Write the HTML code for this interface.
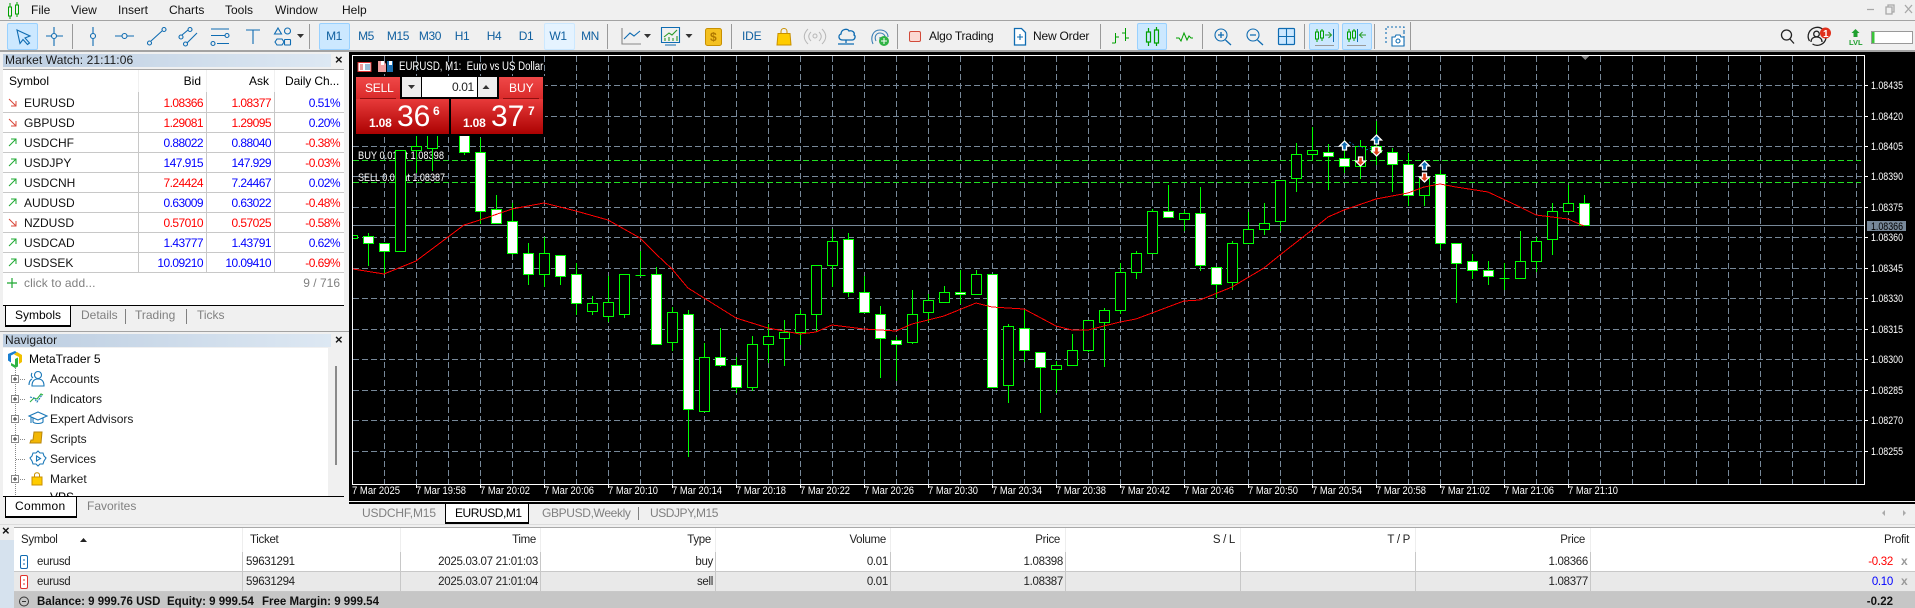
<!DOCTYPE html>
<html><head><meta charset="utf-8"><title>MetaTrader 5</title>
<style>
html,body{margin:0;padding:0;background:#f0f0f0;width:1915px;height:608px;overflow:hidden}
body{position:relative;font-family:"Liberation Sans",sans-serif;font-size:12px;color:#000}
.a{position:absolute}
.t{position:absolute;white-space:nowrap;line-height:14px}
.m{top:3px;font-size:12px;color:#111}
.tf{top:29px;font-size:12px;color:#0f5f9f;width:30px;text-align:center;letter-spacing:-.4px}
.title{position:absolute;left:3px;width:328px;height:13px;background:linear-gradient(90deg,#bccde0,#dde8f3);font-size:12px;line-height:13px;color:#1a1a1a;padding-left:2px;box-sizing:border-box;letter-spacing:.1px}
.row{position:absolute;left:3px;width:341px;height:20px;border-bottom:1px solid #c8c8c8;box-sizing:border-box;background:#fff}
.row span{position:absolute;top:3px;line-height:14px;white-space:nowrap;letter-spacing:-.55px}
.s{left:21px;color:#111;letter-spacing:0!important}
.b{right:141px}.k{right:73px}.d{right:4px}
.r{color:#f00}.u{color:#00f}
.v{position:absolute;width:1px;background:#c8c8c8}
.g{color:#808080}
.n{left:50px;font-size:12px;color:#1a1a1a}
.h,.c{font-size:11.5px;letter-spacing:-.3px;color:#222}
.bal{font-weight:bold;font-size:11.5px;letter-spacing:0;color:#111;top:595px}
svg{position:absolute;left:0;top:0}
svg text{font-family:"Liberation Sans",sans-serif}
</style></head><body>

<!-- chart -->
<div class="a" style="left:349px;top:52px;width:1566px;height:449px;background:#000"></div>
<svg width="1915" height="608" shape-rendering="crispEdges">
<g stroke="#778899" fill="none" stroke-dasharray="6 3">
<path d="M353 85.5H1864M353 116.5H1864M353 146.5H1864M353 176.5H1864M353 207.5H1864M353 237.5H1864M353 268.5H1864M353 298.5H1864M353 329.5H1864M353 359.5H1864M353 390.5H1864M353 420.5H1864M353 451.5H1864"/>
<path d="M384.5 56V484M416.5 56V484M448.5 56V484M480.5 56V484M512.5 56V484M544.5 56V484M576.5 56V484M608.5 56V484M640.5 56V484M672.5 56V484M704.5 56V484M736.5 56V484M768.5 56V484M800.5 56V484M832.5 56V484M864.5 56V484M896.5 56V484M928.5 56V484M960.5 56V484M992.5 56V484M1024.5 56V484M1056.5 56V484M1088.5 56V484M1120.5 56V484M1152.5 56V484M1184.5 56V484M1216.5 56V484M1248.5 56V484M1280.5 56V484M1312.5 56V484M1344.5 56V484M1376.5 56V484M1408.5 56V484M1440.5 56V484M1472.5 56V484M1504.5 56V484M1536.5 56V484M1568.5 56V484M1600.5 56V484M1632.5 56V484M1664.5 56V484M1696.5 56V484M1728.5 56V484M1760.5 56V484M1792.5 56V484M1824.5 56V484M1856.5 56V484"/>
</g>
<path d="M353 225.5H1864" stroke="#778899"/>
<path d="M353 160.5H1861M353 182.5H1861" stroke="#22e022" stroke-dasharray="6 3"/>
<text x="358" y="159" font-size="11" fill="#fff" textLength="86" lengthAdjust="spacingAndGlyphs">BUY 0.01 at 1.08398</text>
<text x="358" y="181" font-size="11" fill="#fff" textLength="87" lengthAdjust="spacingAndGlyphs">SELL 0.01 at 1.08387</text>
<!-- wicks -->
<path stroke="#0f0" fill="none" d="M368.5 233V266M384.5 243V274M416.5 134V173M432.5 134V171M464.5 136V155M480.5 138V224M496.5 195V223M512.5 203V255M528.5 243V285M544.5 237V287M560.5 255V285M576.5 263V315M592.5 296V315M608.5 276V322M624.5 314V318M640.5 251V275M656.5 267V274M672.5 307V351M688.5 310V457M704.5 343V357M720.5 328V367M736.5 357V393M752.5 336V391M768.5 324V363M784.5 320V366M800.5 310V345M816.5 314V332M832.5 229V287M848.5 233V297M864.5 276V292M880.5 306V378M896.5 337V381M912.5 290V344M928.5 294V322M944.5 286V292M960.5 270V304M976.5 270V274M1008.5 324V403M1024.5 310V362M1040.5 367V413M1056.5 361V393M1072.5 334V350M1088.5 350V352M1104.5 308V367M1120.5 263V314M1136.5 251V279M1152.5 209V211M1168.5 185V211M1184.5 211V231M1200.5 187V271M1216.5 284V298M1232.5 241V290M1248.5 212V229M1264.5 203V235M1280.5 221V231M1296.5 143V192M1312.5 127V160M1328.5 144V190M1344.5 140V173M1360.5 140V179M1376.5 121V165M1392.5 148V192M1408.5 153V206M1424.5 173V206M1440.5 170V249M1456.5 263V303M1472.5 254V279M1488.5 261V285M1504.5 263V290M1520.5 231V261M1536.5 237V272M1552.5 203V255M1568.5 185V213M1584.5 195V203"/>
<!-- hollow -->
<path stroke="#0f0" fill="#000" d="M347.5 235.5h10v3h-10zM395.5 150.5h10v101h-10zM411.5 146.5h10v4h-10zM427.5 120.5h10v28h-10zM539.5 253.5h10v21h-10zM587.5 303.5h10v8h-10zM603.5 302.5h10v14h-10zM619.5 274.5h10v40h-10zM635.5 275.5h10zM667.5 312.5h10v30h-10zM699.5 357.5h10v54h-10zM747.5 344.5h10v43h-10zM763.5 336.5h10v8h-10zM779.5 332.5h10v6h-10zM795.5 314.5h10v18h-10zM811.5 265.5h10v49h-10zM827.5 241.5h10v24h-10zM907.5 314.5h10v28h-10zM923.5 300.5h10v12h-10zM939.5 292.5h10v10h-10zM971.5 274.5h10v20h-10zM1003.5 326.5h10v59h-10zM1051.5 365.5h10v4h-10zM1067.5 350.5h10v15h-10zM1083.5 320.5h10v30h-10zM1099.5 310.5h10v12h-10zM1115.5 272.5h10v38h-10zM1131.5 253.5h10v19h-10zM1147.5 211.5h10v42h-10zM1179.5 213.5h10v6h-10zM1227.5 243.5h10v39h-10zM1243.5 229.5h10v14h-10zM1259.5 223.5h10v6h-10zM1275.5 180.5h10v41h-10zM1291.5 154.5h10v24h-10zM1307.5 150.5h10v4h-10zM1355.5 146.5h10v20h-10zM1419.5 178.5h10v17h-10zM1499.5 278.5h10zM1515.5 261.5h10v17h-10zM1531.5 241.5h10v20h-10zM1547.5 211.5h10v28h-10zM1563.5 203.5h10v8h-10z"/>
<!-- white -->
<path stroke="#0f0" fill="#fff" d="M363.5 236.5h10v7h-10zM379.5 243.5h10v8h-10zM459.5 120.5h10v32h-10zM475.5 152.5h10v59h-10zM491.5 209.5h10v14h-10zM507.5 221.5h10v32h-10zM523.5 253.5h10v21h-10zM555.5 255.5h10v21h-10zM571.5 274.5h10v29h-10zM651.5 274.5h10v70h-10zM683.5 314.5h10v95h-10zM715.5 357.5h10v8h-10zM731.5 365.5h10v22h-10zM843.5 239.5h10v53h-10zM859.5 292.5h10v20h-10zM875.5 314.5h10v24h-10zM891.5 340.5h10v4h-10zM955.5 292.5h10v2h-10zM987.5 274.5h10v113h-10zM1019.5 328.5h10v22h-10zM1035.5 352.5h10v15h-10zM1163.5 211.5h10v6h-10zM1195.5 213.5h10v52h-10zM1211.5 267.5h10v17h-10zM1323.5 152.5h10v4h-10zM1339.5 158.5h10v8h-10zM1371.5 146.5h10v6h-10zM1387.5 152.5h10v12h-10zM1403.5 164.5h10v31h-10zM1435.5 174.5h10v69h-10zM1451.5 243.5h10v20h-10zM1467.5 261.5h10v9h-10zM1483.5 270.5h10v6h-10zM1579.5 203.5h10v22h-10z"/>
<!-- MA -->
<polyline fill="none" stroke="#f00" stroke-width="1" points="353,269 384,274 416,261 432,249 448,237 464,225 480,220 512,209 544,203 576,211 608,220 640,238 656,254 672,269 688,288 704,298 736,318 768,328 800,334 816,332 832,325 864,329 896,331 912,324 944,316 976,303 992,307 1024,309 1056,326 1072,330 1088,330 1120,322 1136,319 1168,307 1184,301 1200,300 1232,287 1264,268 1280,255 1312,230 1328,217 1344,210 1376,199 1408,193 1424,187 1440,184 1456,187 1488,192 1520,207 1536,215 1568,219 1584,226"/>
<!-- trade arrows -->
<g shape-rendering="auto" stroke="#fff" stroke-width="1.300">
<path fill="#0f6cb2" d="M1344.500 141l5 5h-3v4h-4v-4h-3zM1376.500 135l5 5h-3v4h-4v-4h-3zM1424.500 161l5 5h-3v4h-4v-4h-3z"/>
<path fill="#e2401c" d="M1360.500 166l5-5h-3v-4h-4v4h-3zM1376.500 156l5-5h-3v-4h-4v4h-3zM1424.500 182l5-5h-3v-4h-4v4h-3z"/>
</g>
<path d="M1349 142l5 3M1358 146l5 2M1366 150l5-2" stroke="#0f6cb2" stroke-dasharray="2 2" fill="none"/>
<!-- frame -->
<rect x="349" y="53" width="3" height="447" fill="#000"/>
<path d="M352.500 55.500H1864.500V484.500H352.500Z" fill="none" stroke="#fff"/>
<polygon points="1581,56 1589,56 1585,60" fill="#888"/>
<path stroke="#fff" d="M1865 85.500h3M1865 116.500h3M1865 146.500h3M1865 176.500h3M1865 207.500h3M1865 237.500h3M1865 268.500h3M1865 298.500h3M1865 329.500h3M1865 359.500h3M1865 390.500h3M1865 420.500h3M1865 451.500h3M416.500 485v3M480.500 485v3M544.500 485v3M608.500 485v3M672.500 485v3M736.500 485v3M800.500 485v3M864.500 485v3M928.500 485v3M992.500 485v3M1056.500 485v3M1120.500 485v3M1184.500 485v3M1248.500 485v3M1312.500 485v3M1376.500 485v3M1440.500 485v3M1504.500 485v3M1568.500 485v3"/>
<g fill="#fff" font-size="11" shape-rendering="auto">
<text x="1871" y="89" textLength="32" lengthAdjust="spacingAndGlyphs">1.08435</text>
<text x="1871" y="120" textLength="32" lengthAdjust="spacingAndGlyphs">1.08420</text>
<text x="1871" y="150" textLength="32" lengthAdjust="spacingAndGlyphs">1.08405</text>
<text x="1871" y="180" textLength="32" lengthAdjust="spacingAndGlyphs">1.08390</text>
<text x="1871" y="211" textLength="32" lengthAdjust="spacingAndGlyphs">1.08375</text>
<text x="1871" y="241" textLength="32" lengthAdjust="spacingAndGlyphs">1.08360</text>
<text x="1871" y="272" textLength="32" lengthAdjust="spacingAndGlyphs">1.08345</text>
<text x="1871" y="302" textLength="32" lengthAdjust="spacingAndGlyphs">1.08330</text>
<text x="1871" y="333" textLength="32" lengthAdjust="spacingAndGlyphs">1.08315</text>
<text x="1871" y="363" textLength="32" lengthAdjust="spacingAndGlyphs">1.08300</text>
<text x="1871" y="394" textLength="32" lengthAdjust="spacingAndGlyphs">1.08285</text>
<text x="1871" y="424" textLength="32" lengthAdjust="spacingAndGlyphs">1.08270</text>
<text x="1871" y="455" textLength="32" lengthAdjust="spacingAndGlyphs">1.08255</text>
<text x="352" y="494" textLength="48" lengthAdjust="spacingAndGlyphs">7 Mar 2025</text>
<text x="416" y="494" textLength="50" lengthAdjust="spacingAndGlyphs">7 Mar 19:58</text>
<text x="480" y="494" textLength="50" lengthAdjust="spacingAndGlyphs">7 Mar 20:02</text>
<text x="544" y="494" textLength="50" lengthAdjust="spacingAndGlyphs">7 Mar 20:06</text>
<text x="608" y="494" textLength="50" lengthAdjust="spacingAndGlyphs">7 Mar 20:10</text>
<text x="672" y="494" textLength="50" lengthAdjust="spacingAndGlyphs">7 Mar 20:14</text>
<text x="736" y="494" textLength="50" lengthAdjust="spacingAndGlyphs">7 Mar 20:18</text>
<text x="800" y="494" textLength="50" lengthAdjust="spacingAndGlyphs">7 Mar 20:22</text>
<text x="864" y="494" textLength="50" lengthAdjust="spacingAndGlyphs">7 Mar 20:26</text>
<text x="928" y="494" textLength="50" lengthAdjust="spacingAndGlyphs">7 Mar 20:30</text>
<text x="992" y="494" textLength="50" lengthAdjust="spacingAndGlyphs">7 Mar 20:34</text>
<text x="1056" y="494" textLength="50" lengthAdjust="spacingAndGlyphs">7 Mar 20:38</text>
<text x="1120" y="494" textLength="50" lengthAdjust="spacingAndGlyphs">7 Mar 20:42</text>
<text x="1184" y="494" textLength="50" lengthAdjust="spacingAndGlyphs">7 Mar 20:46</text>
<text x="1248" y="494" textLength="50" lengthAdjust="spacingAndGlyphs">7 Mar 20:50</text>
<text x="1312" y="494" textLength="50" lengthAdjust="spacingAndGlyphs">7 Mar 20:54</text>
<text x="1376" y="494" textLength="50" lengthAdjust="spacingAndGlyphs">7 Mar 20:58</text>
<text x="1440" y="494" textLength="50" lengthAdjust="spacingAndGlyphs">7 Mar 21:02</text>
<text x="1504" y="494" textLength="50" lengthAdjust="spacingAndGlyphs">7 Mar 21:06</text>
<text x="1568" y="494" textLength="50" lengthAdjust="spacingAndGlyphs">7 Mar 21:10</text>
</g>
<rect x="1867" y="221" width="39" height="10" fill="#778899"/>
<text x="1871" y="230" font-size="11" fill="#000" textLength="32" lengthAdjust="spacingAndGlyphs" shape-rendering="auto">1.08366</text>
</svg>

<!-- one-click panel -->
<div class="a" style="left:353px;top:76px;width:192px;height:60px;background:#000"></div>
<div class="a" style="left:356px;top:77px;width:44px;height:22px;background:linear-gradient(#f04848,#d92a2a)"></div>
<div class="a" style="left:360px;top:98px;width:36px;height:1px;background:#8c1010"></div>
<div class="a" style="left:499px;top:77px;width:44px;height:22px;background:linear-gradient(#f04848,#d92a2a)"></div>
<div class="a" style="left:503px;top:98px;width:36px;height:1px;background:#8c1010"></div>
<div class="a" style="left:356px;top:99px;width:93px;height:35px;background:linear-gradient(#e83a3a,#ac0202)"></div>
<div class="a" style="left:451px;top:99px;width:92px;height:35px;background:linear-gradient(#e83a3a,#ac0202)"></div>
<div class="a" style="left:402px;top:77px;width:19px;height:20px;background:#eee"></div>
<div class="a" style="left:422px;top:77px;width:55px;height:20px;background:#fff"></div>
<div class="a" style="left:478px;top:77px;width:19px;height:20px;background:#eee"></div>
<span class="t" style="left:365px;top:81px;color:#fff;font-size:12px;letter-spacing:-.2px">SELL</span>
<span class="t" style="left:509px;top:81px;color:#fff;font-size:12px">BUY</span>
<span class="t" style="left:452px;top:80px;color:#222;font-size:12px;letter-spacing:-.4px">0.01</span>
<span class="t" style="left:369px;top:116px;color:#fff;font-size:12px;font-weight:bold;letter-spacing:-.2px">1.08</span>
<span class="t" style="left:397px;top:100px;color:#fff;font-size:30px;line-height:34px">36</span>
<span class="t" style="left:433px;top:104px;color:#fff;font-size:12px;font-weight:bold">6</span>
<span class="t" style="left:463px;top:116px;color:#fff;font-size:12px;font-weight:bold;letter-spacing:-.2px">1.08</span>
<span class="t" style="left:491px;top:100px;color:#fff;font-size:30px;line-height:34px">37</span>
<span class="t" style="left:528px;top:104px;color:#fff;font-size:12px;font-weight:bold">7</span>
<span class="t" style="left:399px;top:60px;color:#fff;font-size:11.500px;transform:scaleX(.84);transform-origin:left center">EURUSD, M1:&nbsp; Euro vs US Dollar</span>
<svg width="1915" height="608" style="pointer-events:none">
<rect x="358" y="62.500" width="13" height="9" fill="#fff" stroke="#d33"/><path d="M360 65h3M360 67h3M360 69h3" stroke="#d33"/><path d="M365 65h5M365 67h5M365 69h5" stroke="#37a"/>
<path d="M378 61h6l2 3v8h-8z" fill="#f2a0a0"/><path d="M381 61v4h3v-4z" fill="#fff"/><path d="M387 61h6v11h-6z" fill="#1a6fb0"/><path d="M389 61v4h3v-4z" fill="#fff"/>
<path d="M408 85h7l-3.500 4z" fill="#333"/>
<path d="M482.500 89h7l-3.500-4z" fill="#333"/>
</svg>

<!-- top bars -->
<div class="a" style="left:0;top:0;width:1915px;height:21px;background:#f0f0f0"></div>
<div class="a" style="left:0;top:20px;width:1915px;height:1px;background:#a3a3a3"></div>
<div class="a" style="left:0;top:21px;width:1915px;height:29px;background:#f0f0f0"></div>
<div class="a" style="left:0;top:50px;width:1915px;height:2px;background:#a3a3a3"></div>
<div class="a" style="left:7px;top:23px;width:29px;height:25px;background:#cce8ff;border:1px solid #99d1ff;border-radius:2px"></div>
<div class="a" style="left:319px;top:23px;width:29px;height:25px;background:#cce8ff;border:1px solid #99d1ff;border-radius:2px"></div>
<div class="a" style="left:544px;top:23px;width:29px;height:25px;background:#e5f3ff;border:1px solid #cce8ff;border-radius:2px"></div>
<div class="a" style="left:1137px;top:23px;width:28px;height:25px;background:#cce8ff;border:1px solid #99d1ff;border-radius:2px"></div>
<div class="a" style="left:1309px;top:23px;width:28px;height:25px;background:#cce8ff;border:1px solid #99d1ff;border-radius:2px"></div>
<div class="a" style="left:1342px;top:23px;width:28px;height:25px;background:#cce8ff;border:1px solid #99d1ff;border-radius:2px"></div>

<span class="t m" style="left:31px">File</span><span class="t m" style="left:71px">View</span><span class="t m" style="left:118px">Insert</span><span class="t m" style="left:169px">Charts</span><span class="t m" style="left:225px">Tools</span><span class="t m" style="left:275px">Window</span><span class="t m" style="left:342px">Help</span>

<span class="t tf" style="left:319px">M1</span><span class="t tf" style="left:351px">M5</span><span class="t tf" style="left:383px">M15</span><span class="t tf" style="left:415px">M30</span><span class="t tf" style="left:447px">H1</span><span class="t tf" style="left:479px">H4</span><span class="t tf" style="left:511px">D1</span><span class="t tf" style="left:543px">W1</span><span class="t tf" style="left:575px">MN</span>
<span class="t" style="left:742px;top:29px;color:#0f5f9f;font-size:12px;letter-spacing:-.2px">IDE</span>
<span class="t" style="left:929px;top:29px;font-size:12px;color:#111;letter-spacing:-.25px">Algo Trading</span>
<span class="t" style="left:1033px;top:29px;font-size:12px;color:#111;letter-spacing:-.2px">New Order</span>

<svg width="1915" height="60" style="height:60px">
<g fill="none" stroke="#00a000"><path d="M8.500 7h3v9h-3zM15.500 5h3v9h-3zM10 3v4M10 16v3M17 2v3M17 14v3"/></g>
<g fill="none" stroke="#0f6cb2" stroke-width="1.100">
<path d="M17 30l13 6-5 2 4.500 5-2 1.500-4.500-5-3 4z" />
<path d="M46 36h5M57 36h6M54 27v6M54 39v7"/><circle cx="54" cy="36" r="2.500"/>
<path d="M93 27v6.500M93 39v7"/><circle cx="93" cy="36" r="2.500"/>
<path d="M115 36h7M127 36h7"/><circle cx="124.500" cy="36" r="2.500"/>
<path d="M151 41l11-10"/><circle cx="149.500" cy="43" r="2"/><circle cx="164" cy="29.500" r="2"/>
<path d="M182 35l6-5M187 43l10-10"/><circle cx="181" cy="37" r="2"/><circle cx="190" cy="29.500" r="2"/><circle cx="185.500" cy="44" r="2"/>
<path d="M211 29h18M211 35.500h14M217 43.500h12"/><circle cx="227" cy="35.500" r="2"/><circle cx="213" cy="43.500" r="2"/>
<path d="M246 30h14M253 30v14"/>
<path d="M278 28l3.500 6h-7zM277 39h5l2 3-2 3h-5l-2-3z"/><circle cx="287.500" cy="31" r="3"/><rect x="284.500" y="39.500" width="6" height="5.500" rx=".5"/>
<path d="M622 28v16h19" stroke="#888"/><path d="M624 39l6-6 4 3 6-5"/>
<path d="M661.500 27.500h18v15h-18zM665 45h11"/><path d="M664 37l5-4 3 2 5-5" stroke="#2a9a2a"/><path d="M665 41v-3M669 41v-4M673 41v-3M677 41v-5" stroke="#2a9a2a"/>
<path d="M844 40c-5 0-5-5-2-6 0-5 7-6 8-3 4-1 6 2 5 4 2 1 1 5-2 5zM847 40v3M839 44h16" stroke-width="1.300" transform="translate(-1,0)"/>
<path d="M873 44c-3-7 0-14 7-14 5 0 8 3 8 7M876 41c-2-4 0-8 4-8 3 0 5 2 5 4M880 37v4" stroke="#3a7fb5"/>
<path d="M1014.500 28.500h7l4 4v12.500h-11z" stroke-width="1.300" fill="#fff"/><path d="M1017 37h6M1020 34v6"/>
<circle cx="1221" cy="35" r="6"/><path d="M1218 35h6M1221 32v6M1225.500 40l5.500 5" stroke-width="1.300"/>
<circle cx="1253" cy="35" r="6"/><path d="M1250 35h6M1257.500 40l5.500 5" stroke-width="1.300"/>
<rect x="1278.500" y="28.500" width="16" height="16" rx="1" fill="#cce8ff" stroke-width="1.200"/><path d="M1286.500 28.500v16M1278.500 36.500h16"/>
<path d="M1386 34v-7h18v5M1386 37v7M1404 32v14h-13" stroke-dasharray="2 2"/><path d="M1392 46v-9h3l1-2h4l1 2h3v9z" fill="#fff"/><circle cx="1398" cy="41" r="2"/>
</g>
<g stroke="#9a9a9a"><path d="M72.500 24v25M309.500 24v25M607.500 24v25M731.500 24v25M897.500 24v25M1100.500 24v25M1202.500 24v25M1304.500 24v25M1374.500 24v25M1410.500 22v28"/></g>
<path d="M297 34h7l-3.500 4zM644 34h7l-3.500 4zM685.500 34h7l-3.500 4z" fill="#333"/>
<rect x="705.500" y="28.500" width="16" height="17" rx="2" fill="#f4c020" stroke="#c89000"/>
<text x="710" y="41" font-size="12" font-weight="bold" fill="#b07800">$</text>
<path d="M778 33.500h12l1 11.500h-14z" fill="#ffcc00" stroke="#c89000"/><path d="M781 33.500v-2c0-4 6-4 6 0v2" fill="none" stroke="#c89000"/>
<g fill="none" stroke="#b8b8b8"><circle cx="815" cy="36" r="2"/><path d="M811 32c-3 3-3 6 0 9M819 32c3 3 3 6 0 9M808 29c-5 5-5 10 0 15M822 29c5 5 5 10 0 15"/></g>
<circle cx="884" cy="41" r="5" fill="#2fb344"/><path d="M881 41h6M884 38v6" stroke="#fff"/>
<rect x="909.500" y="31.500" width="11" height="10" rx="1.500" fill="#fbd9d3" stroke="#d24a3a"/>
<g fill="none" stroke="#00a000">
<path d="M1115.500 33v10M1112 43h3.500M1115.500 37h3.500M1125.500 28v13M1122 33h3.500M1125.500 38h3.500"/>
<path d="M1146.500 32h4v10h-4zM1154.500 30h4v13h-4zM1148.500 28v4M1148.500 42v4M1156.500 27v3M1156.500 43v3" stroke-width="1.200"/>
<path d="M1176 38h3l2 3 3-8 3 7 2-4 2 2h2"/>
<path d="M1315.500 32h3v7h-3zM1320.500 31h3v7h-3zM1317 29v3M1317 39v3M1322 29v2M1322 38v3"/>
<path d="M1347.500 32h3v7h-3zM1352.500 31h3v7h-3zM1349 29v3M1349 39v3M1354 29v2M1354 38v3"/>
</g>
<path d="M1325 35h6M1328.500 32l3 3-3 3M1366 35h-6M1362.500 32l-3 3 3 3" fill="none" stroke="#2aa02a"/>
<path d="M1333.500 29v13M1357.500 29v13" fill="none" stroke="#0f6cb2"/>
<path d="M1315 45.500h19M1347 45.500h19" stroke="#999"/>
<g fill="none" stroke="#222" stroke-width="1.300"><circle cx="1786.500" cy="35" r="5"/><path d="M1790 39l4 4.500"/><circle cx="1816.500" cy="34" r="2.800"/><path d="M1811 42c0-3 2-5 5.500-5s5.500 2 5.500 5M1809.500 41a9 9 0 1 1 3 3"/></g>
<circle cx="1825.500" cy="33" r="5.500" fill="#e0311d"/>
<text x="1823" y="37" font-size="10" font-weight="bold" fill="#fff">1</text>
<path d="M1855.500 29l4 4h-2v4h-4v-4h-2z" fill="#1fa02f"/>
<text x="1849" y="45" font-size="7.500" fill="#1fa02f" font-weight="bold">LVL</text>
<rect x="1871.500" y="31.500" width="41" height="12" fill="#fff" stroke="#999"/><rect x="1872" y="32" width="2.500" height="11" fill="#3ac43a"/>
<g fill="none" stroke="#a8a8a8" stroke-width="1.300"><path d="M1867 9.500h7M1886 7h6v7h-6zM1888 7v-2h6v7h-2M1905 5l7 8M1912 5l-7 8"/></g>
</svg>

<!-- Market Watch -->
<div class="a" style="left:0;top:52px;width:349px;height:449px;background:#f0f0f0"></div>
<div class="a" style="left:0;top:50px;width:349px;height:2px;background:#a3a3a3"></div>
<div class="title" style="top:54px">Market Watch: 21:11:06</div>
<span class="t" style="left:335px;top:53px;font-size:13px;font-weight:bold;color:#111">×</span>
<div class="a" style="left:3px;top:69px;width:341px;height:236px;background:#fff;border-top:1px solid #a8a8a8;box-sizing:border-box"></div>
<span class="t" style="left:9px;top:74px">Symbol</span>
<span class="t" style="right:1714px;top:74px">Bid</span>
<span class="t" style="right:1646px;top:74px">Ask</span>
<span class="t" style="left:285px;top:74px;letter-spacing:-.1px">Daily Ch...</span>
<div class="row" style="top:93px"><span class="s">EURUSD</span><span class="b r">1.08366</span><span class="k r">1.08377</span><span class="d u">0.51%</span></div>
<div class="row" style="top:113px"><span class="s">GBPUSD</span><span class="b r">1.29081</span><span class="k r">1.29095</span><span class="d u">0.20%</span></div>
<div class="row" style="top:133px"><span class="s">USDCHF</span><span class="b u">0.88022</span><span class="k u">0.88040</span><span class="d r">-0.38%</span></div>
<div class="row" style="top:153px"><span class="s">USDJPY</span><span class="b u">147.915</span><span class="k u">147.929</span><span class="d r">-0.03%</span></div>
<div class="row" style="top:173px"><span class="s">USDCNH</span><span class="b r">7.24424</span><span class="k u">7.24467</span><span class="d u">0.02%</span></div>
<div class="row" style="top:193px"><span class="s">AUDUSD</span><span class="b u">0.63009</span><span class="k u">0.63022</span><span class="d r">-0.48%</span></div>
<div class="row" style="top:213px"><span class="s">NZDUSD</span><span class="b r">0.57010</span><span class="k r">0.57025</span><span class="d r">-0.58%</span></div>
<div class="row" style="top:233px"><span class="s">USDCAD</span><span class="b u">1.43777</span><span class="k u">1.43791</span><span class="d u">0.62%</span></div>
<div class="row" style="top:253px"><span class="s">USDSEK</span><span class="b u">10.09210</span><span class="k u">10.09410</span><span class="d r">-0.69%</span></div>
<div class="v" style="left:138px;top:92px;height:181px"></div><div class="v" style="left:206px;top:92px;height:181px"></div><div class="v" style="left:274px;top:92px;height:181px"></div>
<div class="v" style="left:138px;top:70px;height:22px;background:#f0f0f0"></div><div class="v" style="left:206px;top:70px;height:22px;background:#f0f0f0"></div><div class="v" style="left:274px;top:70px;height:22px;background:#f0f0f0"></div>
<span class="t g" style="left:24px;top:276px;letter-spacing:.1px">click to add...</span>
<span class="t g" style="right:1575px;top:276px">9 / 716</span>
<svg width="349" height="520" style="width:349px;height:520px">
<g fill="none" stroke-width="1"><path d="M9 99l7 7M16 101v5h-5M9 119l7 7M16 121v5h-5M9 219l7 7M16 221v5h-5" stroke="#d9483a"/><path d="M9 146l7-7M11 139h5v5M9 166l7-7M11 159h5v5M9 186l7-7M11 179h5v5M9 206l7-7M11 199h5v5M9 246l7-7M11 239h5v5M9 266l7-7M11 259h5v5" stroke="#1ea832"/><path d="M7 283h10M12 278v10" stroke="#1ea832" stroke-width="1.200"/></g>
</svg>
<div class="a" style="left:3px;top:305px;width:341px;height:1px;background:#000"></div>
<div class="a" style="left:5px;top:305px;width:64px;height:19px;background:#fff;border:1px solid #000;border-top:1px solid #000;border-bottom-width:2px;box-sizing:content-box"></div>
<span class="t" style="left:15px;top:308px">Symbols</span>
<span class="t g" style="left:81px;top:308px">Details</span><span class="t g" style="left:135px;top:308px">Trading</span><span class="t g" style="left:197px;top:308px">Ticks</span>
<div class="v" style="left:125px;top:309px;height:15px;background:#808080"></div><div class="v" style="left:186px;top:309px;height:15px;background:#808080"></div>

<!-- Navigator -->
<div class="a" style="left:0;top:331px;width:349px;height:1px;background:#a3a3a3"></div>
<div class="title" style="top:334px">Navigator</div>
<span class="t" style="left:335px;top:333px;font-size:13px;font-weight:bold;color:#111">×</span>
<div class="a" style="left:3px;top:348px;width:325px;height:148px;background:#fff;overflow:hidden">
<span class="t" style="left:47px;top:142px;font-size:12px">VPS</span></div>
<div class="a" style="left:335px;top:366px;width:2px;height:99px;background:#8a8a8a"></div>
<span class="t" style="left:29px;top:352px">MetaTrader 5</span>
<span class="t n" style="top:372px">Accounts</span><span class="t n" style="top:392px">Indicators</span><span class="t n" style="top:412px">Expert Advisors</span><span class="t n" style="top:432px">Scripts</span><span class="t n" style="top:452px">Services</span><span class="t n" style="top:472px">Market</span>
<svg width="349" height="500" style="width:349px;height:500px">
<path d="M15.500 368V496" stroke="#888" stroke-dasharray="1 1"/>
<path d="M20 379.500h6M20 399.500h6M20 419.500h6M20 439.500h6M16 459.500h10M20 479.500h6" stroke="#888" stroke-dasharray="1 1"/>
<g fill="#fff" stroke="#888"><rect x="11.500" y="375.500" width="7" height="7"/><rect x="11.500" y="395.500" width="7" height="7"/><rect x="11.500" y="415.500" width="7" height="7"/><rect x="11.500" y="435.500" width="7" height="7"/><rect x="11.500" y="475.500" width="7" height="7"/></g>
<path d="M13 379h4M15 377v4M13 399h4M15 397v4M13 419h4M15 417v4M13 439h4M15 437v4M13 479h4M15 477v4" stroke="#333"/>
<path d="M8 354l7-3 2 1.500-6 3v7l-3-2z" fill="#1a7fd0"/><path d="M11 363l4 2v-6l3-1.500v9l-3 1.500-4-2.500z" fill="#2fb344"/><path d="M17 352l5 3v7l-3 2v-7l-5-2.500z" fill="#f0c000"/>
<g fill="none" stroke="#1a78b8" stroke-width="1.100">
<circle cx="38" cy="375" r="3.500"/><path d="M32 386c0-5 2-7 6-7s6 2 6 7zM29 385c0-3 1-5 3-6M33 378a3.500 3.500 0 0 1-1-5"/>
<path d="M30 402l4-4 3 1 4-5 2 1" stroke="#2fb344"/><path d="M30 397l4 1 3 4 5-7" stroke="#1a78b8" stroke-dasharray="2 1"/>
<path d="M29 416l9-4 9 4-9 4zM33 418v4c2 2 8 2 10 0v-4M31 417v6"/>
<path d="M38 451l2 2h3l1 3 2 2-2 3-1 3h-3l-2 2-2-2h-3l-1-3-2-3 2-2 1-3h3z"/><path d="M36.500 456v5l4-2.500z"/>
</g>
<path d="M34 432h8l-1 11h-11l1-3h2z" fill="#f2b705" stroke="#b8860b"/>
<path d="M32 477h10v8h-10z" fill="#ffcc00" stroke="#c89000"/><path d="M34.500 477v-2c0-3 5-3 5 0v2" fill="none" stroke="#c89000"/>
</svg>
<div class="a" style="left:3px;top:496px;width:341px;height:1px;background:#000"></div>
<div class="a" style="left:5px;top:496px;width:70px;height:19px;background:#fff;border:1px solid #000;border-bottom-width:2px"></div>
<span class="t" style="left:15px;top:499px;letter-spacing:.3px">Common</span>
<span class="t g" style="left:87px;top:499px">Favorites</span>

<!-- Chart tabs -->
<div class="a" style="left:349px;top:501px;width:1566px;height:1px;background:#f0f0f0"></div>
<div class="a" style="left:349px;top:502px;width:1566px;height:2px;background:#000"></div>
<div class="a" style="left:349px;top:504px;width:1566px;height:20px;background:#f0f0f0"></div>
<div class="a" style="left:445px;top:503px;width:82px;height:18px;background:#fff;border:1px solid #000;border-bottom-width:2px"></div>
<span class="t g" style="left:362px;top:506px;letter-spacing:-.15px">USDCHF,M15</span>
<span class="t" style="left:455px;top:506px;letter-spacing:-.45px">EURUSD,M1</span>
<span class="t g" style="left:542px;top:506px;letter-spacing:-.35px">GBPUSD,Weekly</span>
<span class="t g" style="left:650px;top:506px;letter-spacing:-.45px">USDJPY,M15</span>
<div class="v" style="left:638px;top:507px;height:13px;background:#808080"></div>
<svg width="1915" height="530"><path d="M1885 510v6l-3-3zM1903 510v6l3-3z" fill="#aaa"/></svg>

<!-- Toolbox -->
<div class="a" style="left:0;top:524px;width:1915px;height:1px;background:#dcdcdc"></div>
<div class="a" style="left:0;top:525px;width:14px;height:83px;background:linear-gradient(#f0f0f0 15px,#d6e2ee 15px)"></div>
<span class="t" style="left:2px;top:524px;font-size:13px;font-weight:bold;color:#111">×</span>
<div class="a" style="left:14px;top:527px;width:1901px;height:1px;background:#a8a8a8"></div>
<div class="a" style="left:14px;top:528px;width:1901px;height:24px;background:#fff"></div>
<div class="a" style="left:14px;top:552px;width:1901px;height:19px;background:#fff;border-bottom:1px solid #c8c8c8"></div>
<div class="a" style="left:14px;top:572px;width:1901px;height:19px;background:#e9e9e9;border-bottom:1px solid #c8c8c8"></div>
<div class="a" style="left:14px;top:592px;width:1901px;height:16px;background:#c6c6c6"></div>
<div class="v" style="left:242px;top:552px;height:39px"></div><div class="v" style="left:400px;top:552px;height:39px"></div><div class="v" style="left:540px;top:552px;height:39px"></div><div class="v" style="left:715px;top:552px;height:39px"></div><div class="v" style="left:890px;top:552px;height:39px"></div><div class="v" style="left:1065px;top:552px;height:39px"></div><div class="v" style="left:1240px;top:552px;height:39px"></div><div class="v" style="left:1415px;top:552px;height:39px"></div><div class="v" style="left:1590px;top:552px;height:39px"></div>
<div class="v" style="left:242px;top:528px;height:24px;background:#eee"></div><div class="v" style="left:400px;top:528px;height:24px;background:#eee"></div><div class="v" style="left:540px;top:528px;height:24px;background:#eee"></div><div class="v" style="left:715px;top:528px;height:24px;background:#eee"></div><div class="v" style="left:890px;top:528px;height:24px;background:#eee"></div><div class="v" style="left:1065px;top:528px;height:24px;background:#eee"></div><div class="v" style="left:1240px;top:528px;height:24px;background:#eee"></div><div class="v" style="left:1415px;top:528px;height:24px;background:#eee"></div><div class="v" style="left:1590px;top:528px;height:24px;background:#eee"></div>

<span class="t h" style="left:21px;top:533px">Symbol</span>
<span class="t h" style="left:250px;top:533px">Ticket</span>
<span class="t h" style="right:1379px;top:533px">Time</span>
<span class="t h" style="right:1204px;top:533px">Type</span>
<span class="t h" style="right:1029px;top:533px">Volume</span>
<span class="t h" style="right:855px;top:533px">Price</span>
<span class="t h" style="right:680px;top:533px">S / L</span>
<span class="t h" style="right:505px;top:533px">T / P</span>
<span class="t h" style="right:330px;top:533px">Price</span>
<span class="t h" style="right:6px;top:533px">Profit</span>

<span class="t c" style="left:37px;top:555px">eurusd</span><span class="t c" style="left:246px;top:555px">59631291</span><span class="t c" style="right:1377px;top:555px">2025.03.07 21:01:03</span><span class="t c" style="right:1202px;top:555px">buy</span><span class="t c" style="right:1027px;top:555px">0.01</span><span class="t c" style="right:852px;top:555px">1.08398</span><span class="t c" style="right:327px;top:555px">1.08366</span><span class="t c" style="right:22px;top:555px;color:#f00">-0.32</span>
<span class="t c" style="left:37px;top:575px">eurusd</span><span class="t c" style="left:246px;top:575px">59631294</span><span class="t c" style="right:1377px;top:575px">2025.03.07 21:01:04</span><span class="t c" style="right:1202px;top:575px">sell</span><span class="t c" style="right:1027px;top:575px">0.01</span><span class="t c" style="right:852px;top:575px">1.08387</span><span class="t c" style="right:327px;top:575px">1.08377</span><span class="t c" style="right:22px;top:575px;color:#00f">0.10</span>
<span class="t bal" style="left:37px">Balance: 9 999.76 USD</span><span class="t bal" style="left:167px">Equity: 9 999.54</span><span class="t bal" style="left:262px">Free Margin: 9 999.54</span>
<span class="t bal" style="right:22px">-0.22</span>
<span class="t" style="left:1901px;top:554px;font-size:12px;font-weight:bold;color:#999">x</span>
<span class="t" style="left:1901px;top:574px;font-size:12px;font-weight:bold;color:#999">x</span>
<svg width="1915" height="608">
<path d="M80 542l3.500-4 3.500 4z" fill="#222"/>
<rect x="20.500" y="555.500" width="7" height="13" rx="1.500" fill="#fff" stroke="#0f6cb2"/><path d="M23 560h2M23 564h2" stroke="#0f6cb2"/>
<rect x="20.500" y="575.500" width="7" height="13" rx="1.500" fill="#fff" stroke="#e0352b"/><path d="M23 580h2M23 584h2" stroke="#e0352b"/>
<circle cx="24" cy="601.500" r="4.500" fill="none" stroke="#333"/><path d="M22 601.500h4" stroke="#333"/>
</svg>
</body></html>
